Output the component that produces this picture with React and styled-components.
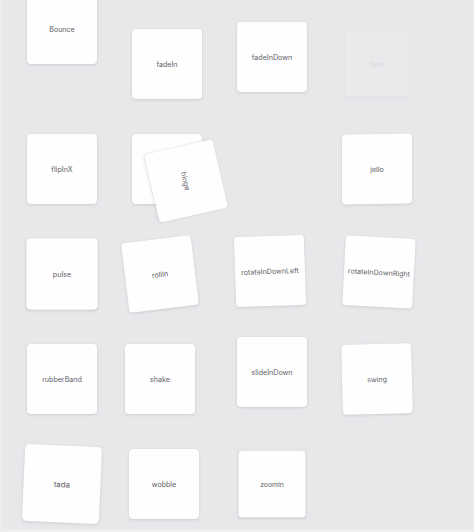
import React from "react";
import styled, { createGlobalStyle } from "styled-components";

const Global = createGlobalStyle`
  html, body { margin: 0; padding: 0; background: #eeeef0; }
  body { font-family: Inter, "Noto Sans", "Liberation Sans", sans-serif; }
`;

const Page = styled.div`
  width: 472px;
  height: 529px;
  margin-left: 2px;
  background: #e8e7ea;
  overflow: hidden;
  box-sizing: border-box;
  padding: 29px 0 0 25px;
`;

const Grid = styled.div`
  display: grid;
  grid-template-columns: repeat(4, 70px);
  grid-auto-rows: 70px;
  column-gap: 35px;
  row-gap: 35px;
`;

const Cell = styled.div`
  position: relative;
  width: 70px;
  height: 70px;
`;

const Card = styled.div`
  width: 70px;
  height: 70px;
  box-sizing: border-box;
  background: #fefefe;
  border-radius: 4px;
  box-shadow: 0 1px 3px rgba(60, 60, 70, 0.14), 0 0 1px rgba(60, 60, 70, 0.08);
  display: flex;
  align-items: center;
  justify-content: center;
  font-size: 7.1px;
  color: #616168;
  white-space: nowrap;
  transform: ${(p) => p.$transform || "none"};
  opacity: ${(p) => (p.$opacity != null ? p.$opacity : 1)};
`;

const Falling = styled(Card)`
  position: absolute;
  left: 0;
  top: 0;
`;

const items = [
  { name: "Bounce", t: "translateY(-35px)" },
  { name: "fadeIn" },
  { name: "fadeInDown", t: "translateY(-7px)" },
  { name: "flash", t: "scale(0.92)", o: 0.12 },
  { name: "flipInX" },
  { name: "hinge", hinge: true },
  { name: "", empty: true },
  { name: "jello", t: "rotate(-1deg) skewX(-1deg)" },
  { name: "pulse", t: "scale(1.02)" },
  { name: "rollIn", t: "translate(-7px, 0) rotate(-7deg)" },
  { name: "rotateInDownLeft", t: "translate(-2px, -3px) rotate(-2deg)" },
  { name: "rotateInDownRight", t: "translate(2px, -2px) rotate(3deg)" },
  { name: "rubberBand" },
  { name: "shake", t: "translateX(-7px)" },
  { name: "slideInDown", t: "translateY(-7px)" },
  { name: "swing", t: "rotate(-1.5deg)" },
  { name: "tada", t: "scale(1.1) rotate(2.5deg)" },
  { name: "wobble", t: "translateX(-3px)" },
  { name: "zoomIn", t: "scale(0.96)" },
];

export default function App() {
  return (
    <>
      <Global />
      <Page>
        <Grid>
          {items.map((it, i) => (
            <Cell key={i}>
              {it.empty ? null : it.hinge ? (
                <>
                  <Card />
                  <Falling $transform="translate(19px, 12px) rotate(77deg)">
                    {it.name}
                  </Falling>
                </>
              ) : (
                <Card $transform={it.t} $opacity={it.o}>
                  {it.name}
                </Card>
              )}
            </Cell>
          ))}
        </Grid>
      </Page>
    </>
  );
}
